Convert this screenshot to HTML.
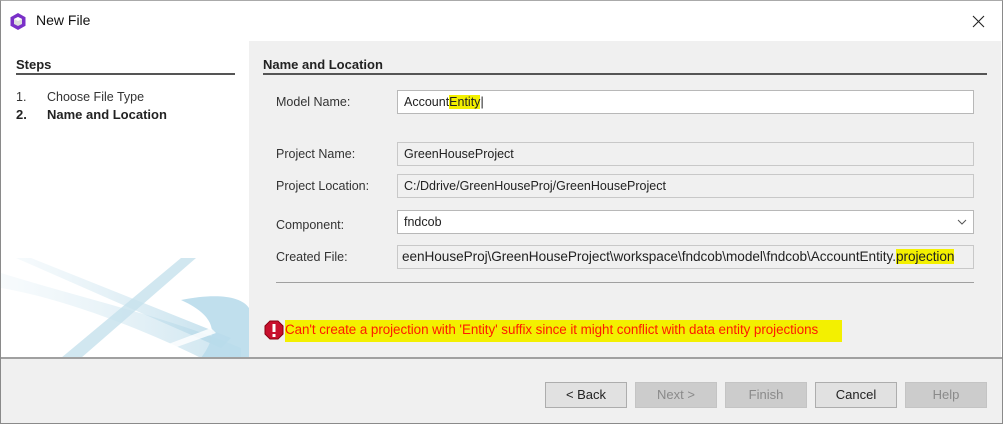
<!DOCTYPE html>
<html><head><style>
*{margin:0;padding:0;box-sizing:border-box}
body{width:1003px;height:424px;background:#fff;font-family:"Liberation Sans",Tahoma,sans-serif;font-size:12px;color:#222;position:relative;overflow:hidden}
.a{position:absolute}
.lbl{position:absolute;left:276px;font-size:12.5px;color:#333}
.in{position:absolute;left:397px;width:577px;height:24px;border:1px solid #c8c8c8;padding-left:6px;line-height:22px;font-size:12.5px;white-space:nowrap;overflow:hidden}
.w{background:#fff;border-color:#b8b8b8}
.g{background:#f0f0f0}
.btn{position:absolute;top:382px;width:82px;height:26px;border:1px solid #adadad;background:#e1e1e1;text-align:center;line-height:24px;font-size:13px}
.dis{background:#cccccc;border-color:#c4c4c4;color:#8a8a8a}
.hl{background:#f3f000}
</style></head><body>
<div class="a" style="left:0;top:0;width:1003px;height:424px;border:1px solid #8a8a8a;border-top-color:#aaa"></div>
<svg class="a" style="left:10px;top:13px" width="16" height="17" viewBox="0 0 16 17"><polygon points="8,0 15.5,4.3 15.5,12.7 8,17 0.5,12.7 0.5,4.3" fill="#7a30c8"/><polygon points="8,4 12,6 12,11 8,13 4,11 4,6" fill="#ddd"/><polygon points="8,4 12,6 8,8 4,6" fill="#fff"/></svg>
<div class="a" style="left:36px;top:12px;font-size:14px;color:#111">New File</div>
<svg class="a" style="left:972px;top:15px" width="13" height="13"><path d="M1 1L12 12M12 1L1 12" stroke="#222" stroke-width="1.1"/></svg>
<div class="a" style="left:249px;top:41px;width:752px;height:317px;background:#f0f0f0"></div>
<svg class="a" style="left:1px;top:248px" width="248" height="110" viewBox="0 0 248 110">
<defs><linearGradient id="lg" x1="0" x2="1"><stop offset="0" stop-color="#d4e8f2" stop-opacity=".3"/><stop offset="1" stop-color="#a9d2e4"/></linearGradient></defs>
<path d="M15 10 L30 10 L230 90 L220 100 Z" fill="url(#lg)" opacity=".7"/>
<path d="M0 25 C80 50 170 70 240 100 L240 110 L200 110 C140 80 60 50 0 40Z" fill="url(#lg)" opacity=".6"/>
<path d="M180 52 C215 45 240 48 248 60 L248 110 L200 110 C215 90 220 70 180 52Z" fill="#b9dceb" opacity=".9"/>
<path d="M195 10 L180 10 L60 110 L80 110 Z" fill="#c5e1ec" opacity=".8"/>
<path d="M130 110 L210 80 L215 85 L145 110Z" fill="#fff" opacity=".8"/>
</svg>
<div class="a" style="left:16px;top:57px;font-weight:bold;font-size:13px">Steps</div>
<div class="a" style="left:16px;top:73px;width:219px;height:2px;background:#555"></div>
<div class="a" style="left:16px;top:90px;color:#333;font-size:12.5px">1.</div><div class="a" style="left:47px;top:90px;color:#333;font-size:12.5px">Choose File Type</div>
<div class="a" style="left:16px;top:107px;font-weight:bold;font-size:13px">2.</div><div class="a" style="left:47px;top:107px;font-weight:bold;font-size:13px">Name and Location</div>
<div class="a" style="left:263px;top:57px;font-weight:bold;font-size:13px">Name and Location</div>
<div class="a" style="left:263px;top:73px;width:724px;height:2px;background:#555"></div>
<div class="lbl" style="top:95px">Model Name:</div>
<div class="in w" style="top:90px">Account<span class="hl">Entity</span>|</div>
<div class="lbl" style="top:147px">Project Name:</div>
<div class="in g" style="top:142px">GreenHouseProject</div>
<div class="lbl" style="top:179px">Project Location:</div>
<div class="in g" style="top:174px">C:/Ddrive/GreenHouseProj/GreenHouseProject</div>
<div class="lbl" style="top:218px">Component:</div>
<div class="in w" style="top:210px">fndcob<svg class="a" style="right:6px;top:8px" width="10" height="7"><path d="M1 1L5 5L9 1" stroke="#555" fill="none"/></svg></div>
<div class="lbl" style="top:250px">Created File:</div>
<div class="in g" style="top:245px;padding-left:4px;font-size:13.6px;letter-spacing:-0.05px">eenHouseProj\GreenHouseProject\workspace\fndcob\model\fndcob\AccountEntity.<span class="hl">projection</span></div>
<div class="a" style="left:276px;top:282px;width:698px;height:1px;background:#a0a0a0"></div>
<svg class="a" style="left:264px;top:320px" width="20" height="20"><polygon points="6,1 14,1 19,6 19,14 14,19 6,19 1,14 1,6" fill="#c8102e" stroke="#8a0010"/><rect x="8.5" y="4" width="3" height="8" fill="#fff"/><rect x="8.5" y="14" width="3" height="3" fill="#fff"/></svg>
<div class="a hl" style="left:285px;top:320px;height:22px;width:557px;line-height:20px;color:#ff1a00;font-size:13.4px;white-space:nowrap;letter-spacing:-0.05px">Can't create a projection with 'Entity' suffix since it might conflict with data entity projections</div>
<div class="a" style="left:1px;top:357px;width:1001px;height:66px;background:#f0f0f0;border-top:2px solid #a0a0a0"></div>
<div class="btn" style="left:545px">&lt; Back</div>
<div class="btn dis" style="left:635px">Next &gt;</div>
<div class="btn dis" style="left:725px">Finish</div>
<div class="btn" style="left:815px">Cancel</div>
<div class="btn dis" style="left:905px">Help</div>
</body></html>
